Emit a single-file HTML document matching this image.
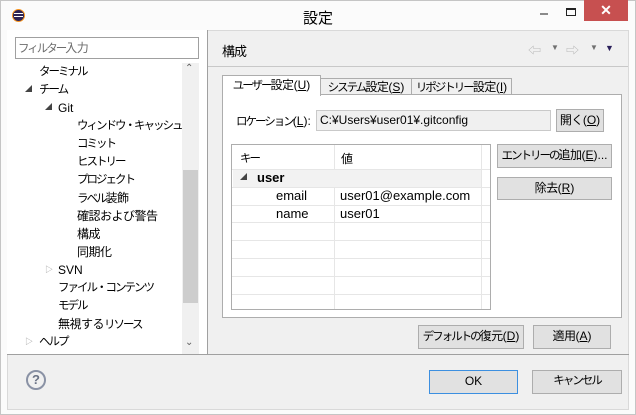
<!DOCTYPE html>
<html><head><meta charset="utf-8"><style>
*{margin:0;padding:0;box-sizing:border-box}
body{width:636px;height:415px;overflow:hidden;background:#fff;font-family:"Liberation Sans","Noto Sans CJK JP",sans-serif;font-size:12px;color:#000;position:relative}
.a{position:absolute;white-space:nowrap}
.btn{position:absolute;background:#e1e1e1;border:1px solid #adadad;text-align:center;line-height:21px;white-space:nowrap;overflow:hidden}
.t{position:absolute;white-space:nowrap;line-height:18px}
.j{font-size:11.5px;letter-spacing:-2px}
.j u,.l{letter-spacing:0;font-size:12px}
.k{font-size:12px;letter-spacing:-0.5px}
.hl{position:absolute;height:1px;background:#e6e6e6}
.vl{position:absolute;width:1px;background:#e6e6e6}
u{text-decoration:underline}
</style></head><body>
<div class="a" style="left:0;top:0;width:636px;height:415px;background:#fbfbfb;border:1px solid #c5c5c5"></div>
<div class="a" style="left:12px;top:9px;width:13px;height:13px;border-radius:50%;background:#2c2255;border:1px solid #f7941e"></div>
<div class="a" style="left:14px;top:13px;width:9px;height:1px;background:#fff"></div>
<div class="a" style="left:14px;top:16px;width:9px;height:1px;background:#fff"></div>
<div class="a" style="left:303px;top:7px;font-size:15px">設定</div>
<div class="a" style="left:540px;top:13px;width:8px;height:2px;background:#8a8a8a"></div>
<div class="a" style="left:566px;top:8px;width:10px;height:8px;border:1px solid #222;border-top-width:2px"></div>
<div class="a" style="left:584px;top:0;width:44px;height:21px;background:#c75050;color:#fff;text-align:center;line-height:20px;font-size:14px;font-weight:bold">✕</div>
<div class="a" style="left:7px;top:30px;width:622px;height:380px;background:#f0f0f0;border:1px solid #d9d9d9"></div>
<div class="a" style="left:7px;top:30px;width:201px;height:325px;background:#fff;border-right:1px solid #a0a0a0"></div>
<div class="a j" style="left:15px;top:37px;width:184px;height:22px;border:1px solid #a0a0a0;background:#fff;color:#6d6d6d;line-height:20px;padding-left:2px">フィルター<span class="k">入力</span></div>
<div class="a" style="left:182px;top:63px;width:17px;height:292px;background:#f0f0f0"></div>
<div class="a" style="left:183px;top:170px;width:15px;height:133px;background:#cdcdcd"></div>
<div class="a" style="left:185px;top:63px;font-size:10px;color:#606060">⌃</div>
<div class="a" style="left:185px;top:337px;font-size:10px;color:#606060">⌄</div>
<div class="t j" style="left:39px;top:63px">ターミナル</div>
<div class="t" style="left:25px;top:81px;font-size:7px;color:#444">◢</div>
<div class="t j" style="left:39px;top:81px">チーム</div>
<div class="t" style="left:45px;top:99px;font-size:7px;color:#444">◢</div>
<div class="t" style="left:58px;top:99px">Git</div>
<div class="t j" style="left:77px;top:117px">ウィンドウ・キャッシュ</div>
<div class="t j" style="left:77px;top:135px">コミット</div>
<div class="t j" style="left:77px;top:153px">ヒストリー</div>
<div class="t j" style="left:77px;top:171px">プロジェクト</div>
<div class="t j" style="left:77px;top:189px">ラベル<span class="k">装飾</span></div>
<div class="t k" style="left:77px;top:207px">確認および警告</div>
<div class="t k" style="left:77px;top:225px">構成</div>
<div class="t k" style="left:77px;top:243px">同期化</div>
<div class="t" style="left:45px;top:261px;font-size:8px;color:#999">▷</div>
<div class="t" style="left:58px;top:261px">SVN</div>
<div class="t j" style="left:58px;top:279px">ファイル・コンテンツ</div>
<div class="t j" style="left:58px;top:297px">モデル</div>
<div class="t j" style="left:58px;top:315px"><span class="k">無視する</span>リソース</div>
<div class="t" style="left:25px;top:333px;font-size:8px;color:#999">▷</div>
<div class="t j" style="left:39px;top:333px">ヘルプ</div>
<div class="a" style="left:222px;top:41px;font-size:13px;letter-spacing:-1px">構成</div>
<div class="a" style="left:208px;top:66px;width:420px;height:1px;background:#c8c8c8"></div>
<div class="a" style="left:528px;top:40px;color:#b8b8b8;font-size:13px">⇦</div>
<div class="a" style="left:551px;top:43px;color:#707070;font-size:8px">▼</div>
<div class="a" style="left:566px;top:40px;color:#b8b8b8;font-size:13px">⇨</div>
<div class="a" style="left:590px;top:43px;color:#707070;font-size:8px">▼</div>
<div class="a" style="left:605px;top:43px;color:#2a1f5a;font-size:9px">▼</div>
<div class="a" style="left:222px;top:94px;width:400px;height:224px;background:#fff;border:1px solid #adadad"></div>
<div class="a j" style="left:320px;top:78px;width:92px;height:17px;background:#f0f0f0;border:1px solid #adadad;text-align:center;line-height:16px">システム<span class="k">設定</span><span class="l">(<u>S</u>)</span></div>
<div class="a j" style="left:411px;top:78px;width:101px;height:17px;background:#f0f0f0;border:1px solid #adadad;text-align:center;line-height:16px">リポジトリー<span class="k">設定</span><span class="l">(<u>I</u>)</span></div>
<div class="a j" style="left:222px;top:75px;width:99px;height:21px;background:#fff;border:1px solid #adadad;border-bottom:none;text-align:center;line-height:19px">ユーザー<span class="k">設定</span><span class="l">(<u>U</u>)</span></div>
<div class="a j" style="left:236px;top:113px">ロケーション<span class="l">(<u>L</u>):</span></div>
<div class="a" style="left:316px;top:110px;width:235px;height:21px;background:#f0f0f0;border:1px solid #c9c9c9;line-height:19px;padding-left:3px">C:¥Users¥user01¥.gitconfig</div>
<div class="btn" style="left:556px;top:109px;width:48px;height:23px"><span class="k">開く</span>(<u>O</u>)</div>
<div class="a" style="left:231px;top:144px;width:260px;height:166px;border:1px solid #adadad;background:#fff"></div>
<div class="a j" style="left:240px;top:150px">キー</div>
<div class="a" style="left:341px;top:150px">値</div>
<div class="vl" style="left:334px;top:145px;height:164px"></div>
<div class="vl" style="left:481px;top:145px;height:164px"></div>
<div class="hl" style="left:232px;top:169px;width:258px"></div>
<div class="a" style="left:233px;top:170px;width:248px;height:17px;background:#f2f2f2"></div>
<div class="t" style="left:240px;top:169px;font-size:7px;color:#444">◢</div>
<div class="t" style="left:257px;top:169px;font-weight:bold;font-size:13px">user</div>
<div class="hl" style="left:232px;top:187px;width:258px"></div>
<div class="t" style="left:276px;top:187px;font-size:13px">email</div>
<div class="t" style="left:340px;top:187px;font-size:13px">user01@example.com</div>
<div class="hl" style="left:232px;top:205px;width:258px"></div>
<div class="t" style="left:276px;top:205px;font-size:13px">name</div>
<div class="t" style="left:340px;top:205px;font-size:13px">user01</div>
<div class="hl" style="left:232px;top:222px;width:258px"></div>
<div class="hl" style="left:232px;top:240px;width:258px"></div>
<div class="hl" style="left:232px;top:258px;width:258px"></div>
<div class="hl" style="left:232px;top:276px;width:258px"></div>
<div class="hl" style="left:232px;top:294px;width:258px"></div>
<div class="btn j" style="left:497px;top:144px;width:115px;height:24px">エントリーの<span class="k">追加</span><span class="l">(<u>E</u>)...</span></div>
<div class="btn" style="left:497px;top:177px;width:115px;height:23px"><span class="k">除去</span>(<u>R</u>)</div>
<div class="btn j" style="left:418px;top:325px;width:106px;height:24px">デフォルトの<span class="k">復元</span><span class="l">(<u>D</u>)</span></div>
<div class="btn" style="left:533px;top:325px;width:78px;height:24px"><span class="k">適用</span>(<u>A</u>)</div>
<div class="a" style="left:7px;top:354px;width:622px;height:1px;background:#a0a0a0"></div>
<div class="a" style="left:26px;top:370px;width:20px;height:20px;border-radius:50%;border:2px solid #8a92a5;text-align:center;line-height:16px;font-weight:bold;color:#6a7285;font-size:13px">?</div>
<div class="btn" style="left:429px;top:370px;width:89px;height:24px;border-color:#3c8fe0">OK</div>
<div class="btn j" style="left:532px;top:370px;width:90px;height:24px">キャンセル</div>
</body></html>
